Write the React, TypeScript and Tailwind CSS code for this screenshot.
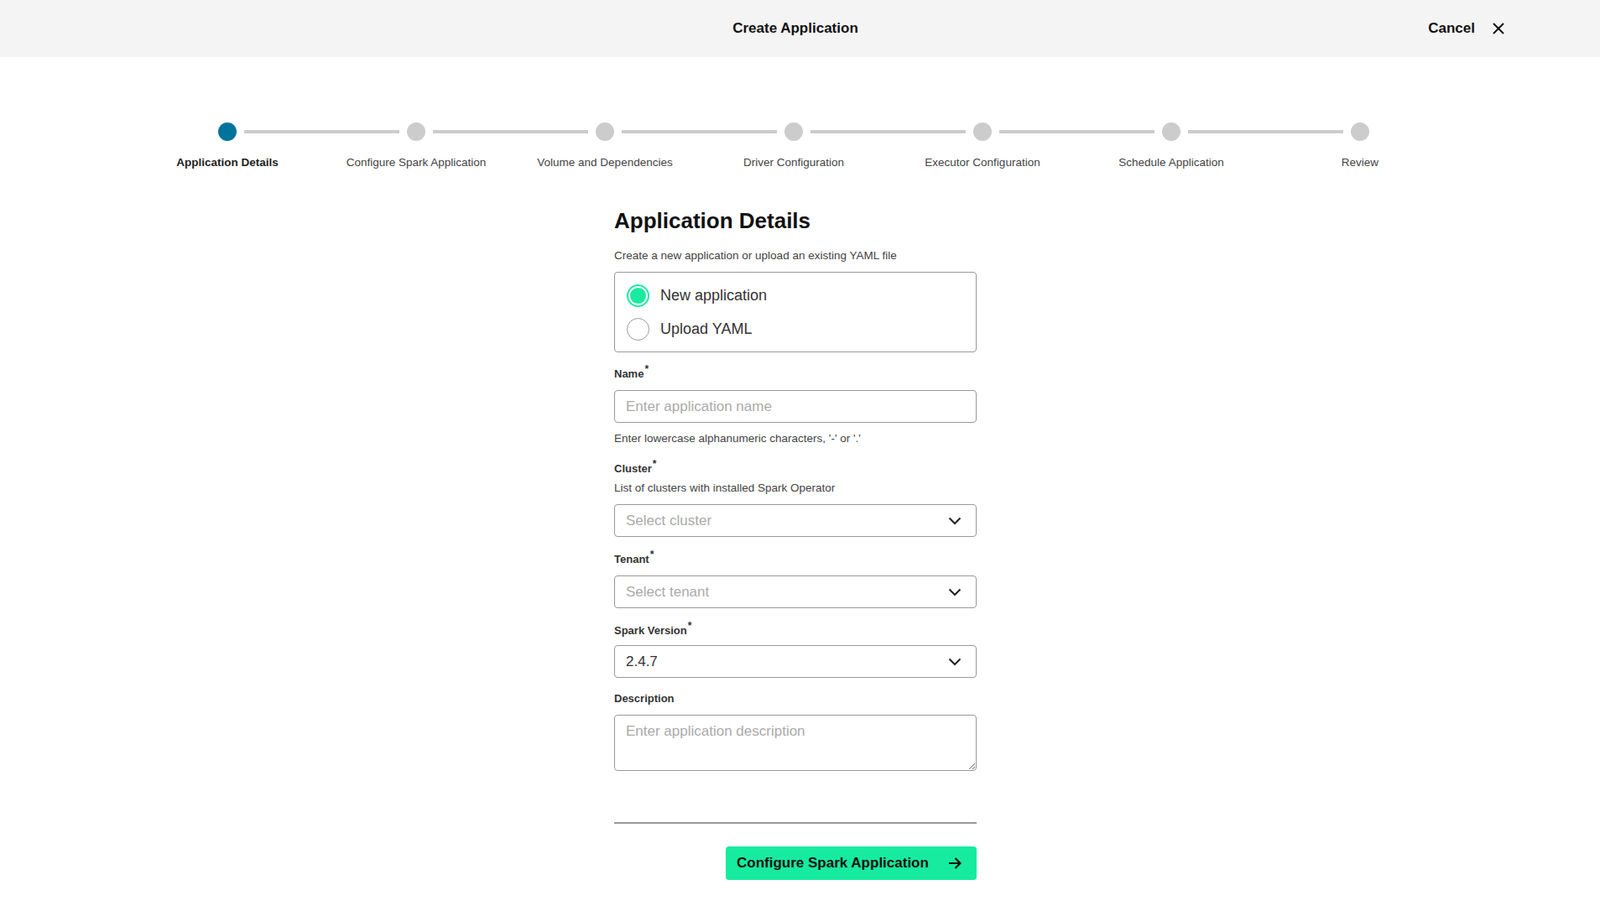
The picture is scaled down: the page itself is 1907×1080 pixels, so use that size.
import React from "react";

const steps = [
  "Application Details",
  "Configure Spark Application",
  "Volume and Dependencies",
  "Driver Configuration",
  "Executor Configuration",
  "Schedule Application",
  "Review",
];

function Chevron() {
  return (
    <svg width="16" height="10" viewBox="0 0 16 10" fill="none">
      <polyline points="1.5,1.5 8,8 14.5,1.5" stroke="#222" strokeWidth="2" />
    </svg>
  );
}

function Label({ text, required }: { text: string; required?: boolean }) {
  return (
    <div className="text-[13px] leading-[18px] font-bold text-[#333]">
      {text}
      {required && <sup className="ml-[1px] text-[12px]">*</sup>}
    </div>
  );
}

function Select({ value, placeholder }: { value?: string; placeholder: string }) {
  return (
    <div className="flex h-[39px] items-center justify-between rounded-[4px] border border-[#999] pl-[13px] pr-[17px]">
      <span className={value ? "text-[17px] text-[#333]" : "text-[17px] text-[#aaa]"}>
        {value ?? placeholder}
      </span>
      <Chevron />
    </div>
  );
}

function Radio({ label, checked }: { label: string; checked?: boolean }) {
  return (
    <div className="flex h-[40px] items-center gap-[13px] pl-[14px]">
      {checked ? (
        <div className="h-[27px] w-[27px] rounded-full border-2 border-[#17eba0] p-[2px]">
          <div className="h-full w-full rounded-full bg-[#17eba0]" />
        </div>
      ) : (
        <div className="h-[27px] w-[27px] rounded-full border-[1.5px] border-[#999]" />
      )}
      <span className="text-[18px] text-[#333]">{label}</span>
    </div>
  );
}

export default function App() {
  return (
    <div className="min-h-screen bg-white font-['Liberation_Sans',Arial,sans-serif] text-[#222]">
      {/* header */}
      <div className="bg-[#f4f4f4]">
        <div className="relative flex h-[68px] w-[1896px] items-center justify-center">
          <h1 className="text-[17px] font-bold text-[#111]">Create Application</h1>
          <button className="absolute right-[103px] top-[21px] flex items-center gap-[21px] text-[17px] font-bold text-[#111]">
            Cancel
            <svg width="14" height="14" viewBox="0 0 14 14">
              <path d="M1 1 L13 13 M13 1 L1 13" stroke="#111" strokeWidth="2" />
            </svg>
          </button>
        </div>
      </div>

      <div className="w-[1892px]">
        {/* stepper */}
        <div className="mx-auto mt-[78px] flex w-[1372px] items-center">
          {steps.map((s, i) => (
            <React.Fragment key={s}>
              <div
                className={
                  i === 0
                    ? "h-[22px] w-[22px] shrink-0 rounded-full bg-[#00739d]"
                    : "h-[22px] w-[22px] shrink-0 rounded-full bg-[#cccccc]"
                }
              />
              {i < steps.length - 1 && <div className="mx-[9px] h-[4px] flex-1 bg-[#cccccc]" />}
            </React.Fragment>
          ))}
        </div>
        <div className="mx-auto mt-[17px] grid w-[1575px] grid-cols-7">
          {steps.map((s, i) => (
            <div
              key={s}
              className={
                i === 0
                  ? "text-center text-[13.5px] leading-[18px] font-bold text-[#222]"
                  : "text-center text-[13.5px] leading-[18px] text-[#444]"
              }
            >
              {s}
            </div>
          ))}
        </div>
      </div>

      {/* form */}
      <div className="w-[1896px]">
        <div className="mx-auto mt-[45px] w-[432px] pb-[30px]">
          <h2 className="text-[26px] leading-[30px] font-bold text-[#111]">Application Details</h2>
          <p className="mt-[18px] text-[13.5px] leading-[18px] text-[#444]">
            Create a new application or upload an existing YAML file
          </p>
          <div className="mt-[10px] rounded-[4px] border border-[#999] py-[7px]">
            <Radio label="New application" checked />
            <Radio label="Upload YAML" />
          </div>

          <div className="mt-[17px]">
            <Label text="Name" required />
          </div>
          <div className="mt-[10px] flex h-[39px] items-center rounded-[4px] border border-[#999] px-[13px]">
            <span className="text-[17px] text-[#aaa]">Enter application name</span>
          </div>
          <p className="mt-[10px] text-[13.5px] leading-[18px] text-[#444]">
            Enter lowercase alphanumeric characters, '-' or '.'
          </p>

          <div className="mt-[18px]">
            <Label text="Cluster" required />
          </div>
          <p className="mt-[5px] text-[13.5px] leading-[18px] text-[#444]">
            List of clusters with installed Spark Operator
          </p>
          <div className="mt-[10px]">
            <Select placeholder="Select cluster" />
          </div>

          <div className="mt-[18px]">
            <Label text="Tenant" required />
          </div>
          <div className="mt-[10px]">
            <Select placeholder="Select tenant" />
          </div>

          <div className="mt-[18px]">
            <Label text="Spark Version" required />
          </div>
          <div className="mt-[8px]">
            <Select placeholder="Select version" value="2.4.7" />
          </div>

          <div className="mt-[16px]">
            <Label text="Description" />
          </div>
          <textarea
            className="mt-[10px] block h-[67px] w-full rounded-[4px] border border-[#999] px-[13px] py-[6px] text-[17px] text-[#333] placeholder:text-[#aaa] outline-none"
            placeholder="Enter application description"
          />

          <div className="mt-[61px] h-[1.5px] bg-[#999]" />

          <div className="mt-[27px] flex justify-end">
            <button className="flex h-[40px] w-[299px] items-center justify-between rounded-[4px] bg-[#17eba0] pl-[13px] pr-[18px] text-[17px] font-bold text-[#111]">
              Configure Spark Application
              <svg width="16" height="16" viewBox="0 0 16 16" fill="none">
                <path d="M1 8 H14.5 M8.5 2 L14.5 8 L8.5 14" stroke="#111" strokeWidth="2.2" />
              </svg>
            </button>
          </div>
        </div>
      </div>
    </div>
  );
}
